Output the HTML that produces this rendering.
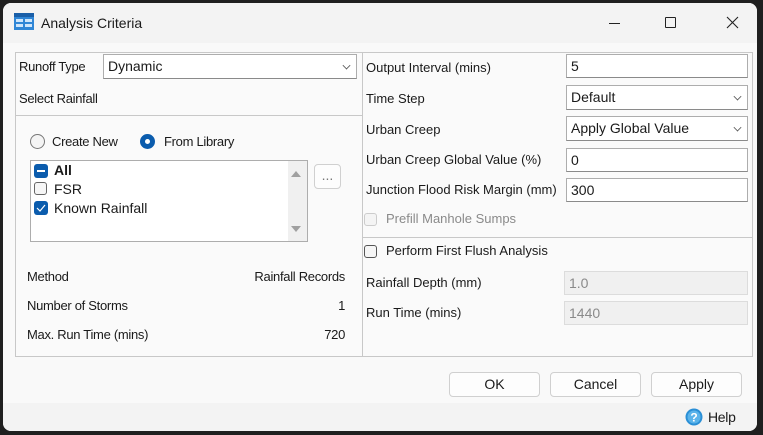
<!DOCTYPE html>
<html><head><meta charset="utf-8"><style>
*{box-sizing:border-box;margin:0;padding:0}
body{width:763px;height:435px;background:#1f1f1f;font-family:"Liberation Sans",sans-serif;font-size:13px;color:#1a1a1a;position:relative;overflow:hidden}
.win{position:absolute;left:3px;top:3px;width:754px;height:428px;background:#f9f9f9;border-radius:8px;overflow:hidden}
.title{position:absolute;left:0;top:0;width:754px;height:40px;background:#f3f3f3}
.a{position:absolute;white-space:nowrap}
.l{letter-spacing:-0.3px}
.box{position:absolute;background:#fff;border:1px solid #adadad;border-bottom-color:#8a8a8a;padding-left:4px;line-height:22px;font-size:14px}
.dis{background:#f0f0f0;border-color:#dcdcdc;color:#8a8a8a}
.chev{position:absolute;right:6px;top:7px;width:7px;height:7px;border-right:1px solid #555;border-bottom:1px solid #555;transform:rotate(45deg) scale(.8)}
.btn{position:absolute;background:#fdfdfd;border:1px solid #d0d0d0;border-radius:4px;text-align:center;line-height:22px;font-size:14px}
.cb{position:absolute;width:13px;height:13px;border:1px solid #555;border-radius:3px;background:#f6f6f6}
</style></head><body>
<div class="win">
<div class="title">
 <svg class="a" style="left:11px;top:10px" width="20" height="17" viewBox="0 0 20 17"><rect width="20" height="17" fill="#2f86d6"/><rect x="0" y="0" width="20" height="4" fill="#1a5fa8"/><rect x="2" y="6" width="7" height="3" fill="#cfe6fb"/><rect x="11" y="6" width="7" height="3" fill="#cfe6fb"/><rect x="2" y="11" width="7" height="3" fill="#cfe6fb"/><rect x="11" y="11" width="7" height="3" fill="#cfe6fb"/></svg>
 <div class="a" style="left:38px;top:12px;font-size:14px">Analysis Criteria</div>
 <div class="a" style="left:606px;top:20px;width:11px;height:1px;background:#222"></div>
 <div class="a" style="left:662px;top:14px;width:11px;height:11px;border:1px solid #222;border-radius:1px"></div>
 <svg class="a" style="left:723px;top:13px" width="13" height="13"><path d="M1 1L12 12M12 1L1 12" stroke="#222" stroke-width="1.1"/></svg>
</div>
<div class="a" style="left:12px;top:49px;width:738px;height:305px;border:1px solid #c8c8c8;background:#fafafa"></div>
<div class="a" style="left:359px;top:49px;width:1px;height:305px;background:#c8c8c8"></div>
<div class="a" style="left:13px;top:112px;width:346px;height:1px;background:#c8c8c8"></div>
<div class="a" style="left:360px;top:234px;width:390px;height:1px;background:#c8c8c8"></div>
<div class="a l" style="left:16px;top:56px">Runoff Type</div>
<div class="box" style="left:100px;top:51px;width:254px;height:25px">Dynamic<div class="chev"></div></div>
<div class="a l" style="left:16px;top:88px">Select Rainfall</div>
<div class="a" style="left:27px;top:131px;width:15px;height:15px;border:1px solid #777;border-radius:50%;background:#f4f4f4"></div>
<div class="a l" style="left:49px;top:131px">Create New</div>
<div class="a" style="left:137px;top:131px;width:15px;height:15px;border-radius:50%;background:#0b5cad"></div>
<div class="a" style="left:142px;top:136px;width:5px;height:5px;border-radius:50%;background:#fff"></div>
<div class="a l" style="left:161px;top:131px">From Library</div>
<div class="a" style="left:27px;top:157px;width:278px;height:82px;border:1px solid #adadad;background:#fff"></div>
<div class="a" style="left:285px;top:158px;width:19px;height:80px;background:#f0f0f0"></div>
<svg class="a" style="left:287px;top:167px" width="12" height="8"><path d="M1 7L6 1L11 7Z" fill="#a0a0a0"/></svg>
<svg class="a" style="left:287px;top:222px" width="12" height="8"><path d="M1 1L6 7L11 1Z" fill="#a0a0a0"/></svg>
<div class="a" style="left:31px;top:161px;width:14px;height:14px;border-radius:3px;background:#0b5cad"></div>
<div class="a" style="left:34px;top:167px;width:8px;height:2px;background:#fff"></div>
<div class="a" style="left:51px;top:159px;font-weight:bold;font-size:14px">All</div>
<div class="cb" style="left:31px;top:179px;border-color:#666"></div>
<div class="a" style="left:51px;top:178px;font-size:14px">FSR</div>
<div class="a" style="left:31px;top:198px;width:14px;height:14px;border-radius:3px;background:#0b5cad"></div>
<svg class="a" style="left:33px;top:201px" width="10" height="8"><path d="M1 4L4 7L9 1" stroke="#fff" fill="none" stroke-width="1.2"/></svg>
<div class="a" style="left:51px;top:197px;font-size:14px">Known Rainfall</div>
<div class="btn" style="left:311px;top:161px;width:27px;height:25px;line-height:20px;color:#777">...</div>
<div class="a l" style="left:24px;top:266px">Method</div>
<div class="a l" style="right:412px;top:266px">Rainfall Records</div>
<div class="a l" style="left:24px;top:295px">Number of Storms</div>
<div class="a l" style="right:412px;top:295px">1</div>
<div class="a l" style="left:24px;top:324px">Max. Run Time (mins)</div>
<div class="a l" style="right:412px;top:324px">720</div>
<div class="a" style="left:363px;top:57px">Output Interval (mins)</div>
<div class="box" style="left:563px;top:51px;width:182px;height:24px">5</div>
<div class="a" style="left:363px;top:88px">Time Step</div>
<div class="box" style="left:563px;top:82px;width:182px;height:25px">Default<div class="chev"></div></div>
<div class="a" style="left:363px;top:119px">Urban Creep</div>
<div class="box" style="left:563px;top:113px;width:182px;height:25px">Apply Global Value<div class="chev"></div></div>
<div class="a" style="left:363px;top:149px">Urban Creep Global Value (%)</div>
<div class="box" style="left:563px;top:145px;width:182px;height:24px">0</div>
<div class="a" style="left:363px;top:179px">Junction Flood Risk Margin (mm)</div>
<div class="box" style="left:563px;top:175px;width:182px;height:24px">300</div>
<div class="cb" style="left:361px;top:210px;border-color:#ccc;background:#f4f4f4"></div>
<div class="a" style="left:383px;top:208px;color:#8a8a8a">Prefill Manhole Sumps</div>
<div class="cb" style="left:361px;top:242px"></div>
<div class="a" style="left:383px;top:240px">Perform First Flush Analysis</div>
<div class="a" style="left:363px;top:272px">Rainfall Depth (mm)</div>
<div class="box dis" style="left:561px;top:268px;width:184px;height:24px">1.0</div>
<div class="a" style="left:363px;top:302px">Run Time (mins)</div>
<div class="box dis" style="left:561px;top:298px;width:184px;height:24px">1440</div>
<div class="a" style="left:0;top:400px;width:754px;height:30px;background:#f3f3f3"></div>
<div class="btn" style="left:446px;top:369px;width:91px;height:25px">OK</div>
<div class="btn" style="left:547px;top:369px;width:91px;height:25px">Cancel</div>
<div class="btn" style="left:648px;top:369px;width:91px;height:25px">Apply</div>
<svg class="a" style="left:682px;top:405px" width="18" height="18"><circle cx="9" cy="9" r="8.5" fill="#2a8fd6"/><circle cx="9" cy="9" r="6.5" fill="#5ab3ea"/><text x="9" y="13.5" font-size="12" font-weight="bold" text-anchor="middle" fill="#fff" font-family="Liberation Sans">?</text></svg>
<div class="a l" style="left:705px;top:406px;font-size:14px">Help</div>
</div>
</body></html>
